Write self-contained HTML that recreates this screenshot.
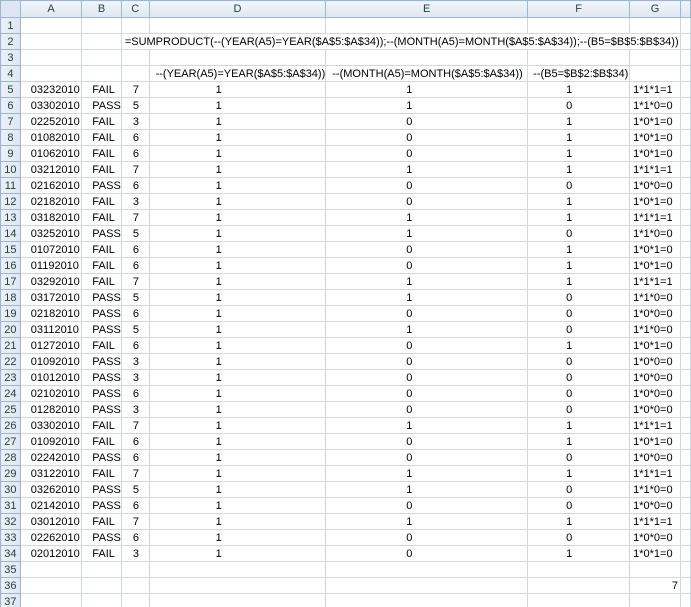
<!DOCTYPE html>
<html><head><meta charset="utf-8"><style>
html,body{margin:0;padding:0;background:#fff;width:691px;height:607px;overflow:hidden}
table{border-collapse:collapse;table-layout:fixed;font-family:"Liberation Sans",sans-serif;font-size:11px;color:#000}
td{box-sizing:border-box;height:16px;padding:0;border:1px solid #d0d7e5;white-space:nowrap;overflow:visible;line-height:14px}
tr.h td{height:17px;background:linear-gradient(#f2f6fb,#dde6f2);border:1px solid #9eb6ce;text-align:center;color:#27413e}
td.r{background:linear-gradient(90deg,#eaf0f8,#dfe7f2);border:1px solid #9eb6ce;text-align:center;color:#27413e;font-size:11px}
td.a{padding-left:10px}td.b{padding-left:10px}td.c{padding-left:11px}
td.d{padding-left:66px}td.e{padding-left:80px}td.f{padding-left:38px}td.g{padding-left:3px}
</style></head><body>
<table>
<colgroup><col style="width:22px"><col style="width:62px"><col style="width:38px"><col style="width:28px"><col style="width:173px"><col style="width:202px"><col style="width:102px"><col style="width:51px"><col style="width:13px"></colgroup>
<tr class="h"><td style="background:#dde6f2"></td><td>A</td><td>B</td><td>C</td><td>D</td><td>E</td><td>F</td><td>G</td><td></td></tr>
<tr><td class="r">1</td><td></td><td></td><td></td><td></td><td></td><td></td><td></td><td></td></tr>
<tr><td class="r">2</td><td></td><td></td><td colspan="5" style="padding-left:3px">=SUMPRODUCT(--(YEAR(A5)=YEAR($A$5:$A$34));--(MONTH(A5)=MONTH($A$5:$A$34));--(B5=$B$5:$B$34))</td><td></td></tr>
<tr><td class="r">3</td><td></td><td></td><td></td><td></td><td></td><td></td><td></td><td></td></tr>
<tr><td class="r">4</td><td></td><td></td><td></td><td style="padding-left:6px">--(YEAR(A5)=YEAR($A$5:$A$34))</td><td style="padding-left:6px">--(MONTH(A5)=MONTH($A$5:$A$34))</td><td style="padding-left:5px">--(B5=$B$2:$B$34)</td><td></td><td></td></tr>
<tr><td class="r">5</td><td class="a">03232010</td><td class="b">FAIL</td><td class="c">7</td><td class="d">1</td><td class="e">1</td><td class="f">1</td><td class="g">1*1*1=1</td><td></td></tr>
<tr><td class="r">6</td><td class="a">03302010</td><td class="b">PASS</td><td class="c">5</td><td class="d">1</td><td class="e">1</td><td class="f">0</td><td class="g">1*1*0=0</td><td></td></tr>
<tr><td class="r">7</td><td class="a">02252010</td><td class="b">FAIL</td><td class="c">3</td><td class="d">1</td><td class="e">0</td><td class="f">1</td><td class="g">1*0*1=0</td><td></td></tr>
<tr><td class="r">8</td><td class="a">01082010</td><td class="b">FAIL</td><td class="c">6</td><td class="d">1</td><td class="e">0</td><td class="f">1</td><td class="g">1*0*1=0</td><td></td></tr>
<tr><td class="r">9</td><td class="a">01062010</td><td class="b">FAIL</td><td class="c">6</td><td class="d">1</td><td class="e">0</td><td class="f">1</td><td class="g">1*0*1=0</td><td></td></tr>
<tr><td class="r">10</td><td class="a">03212010</td><td class="b">FAIL</td><td class="c">7</td><td class="d">1</td><td class="e">1</td><td class="f">1</td><td class="g">1*1*1=1</td><td></td></tr>
<tr><td class="r">11</td><td class="a">02162010</td><td class="b">PASS</td><td class="c">6</td><td class="d">1</td><td class="e">0</td><td class="f">0</td><td class="g">1*0*0=0</td><td></td></tr>
<tr><td class="r">12</td><td class="a">02182010</td><td class="b">FAIL</td><td class="c">3</td><td class="d">1</td><td class="e">0</td><td class="f">1</td><td class="g">1*0*1=0</td><td></td></tr>
<tr><td class="r">13</td><td class="a">03182010</td><td class="b">FAIL</td><td class="c">7</td><td class="d">1</td><td class="e">1</td><td class="f">1</td><td class="g">1*1*1=1</td><td></td></tr>
<tr><td class="r">14</td><td class="a">03252010</td><td class="b">PASS</td><td class="c">5</td><td class="d">1</td><td class="e">1</td><td class="f">0</td><td class="g">1*1*0=0</td><td></td></tr>
<tr><td class="r">15</td><td class="a">01072010</td><td class="b">FAIL</td><td class="c">6</td><td class="d">1</td><td class="e">0</td><td class="f">1</td><td class="g">1*0*1=0</td><td></td></tr>
<tr><td class="r">16</td><td class="a">01192010</td><td class="b">FAIL</td><td class="c">6</td><td class="d">1</td><td class="e">0</td><td class="f">1</td><td class="g">1*0*1=0</td><td></td></tr>
<tr><td class="r">17</td><td class="a">03292010</td><td class="b">FAIL</td><td class="c">7</td><td class="d">1</td><td class="e">1</td><td class="f">1</td><td class="g">1*1*1=1</td><td></td></tr>
<tr><td class="r">18</td><td class="a">03172010</td><td class="b">PASS</td><td class="c">5</td><td class="d">1</td><td class="e">1</td><td class="f">0</td><td class="g">1*1*0=0</td><td></td></tr>
<tr><td class="r">19</td><td class="a">02182010</td><td class="b">PASS</td><td class="c">6</td><td class="d">1</td><td class="e">0</td><td class="f">0</td><td class="g">1*0*0=0</td><td></td></tr>
<tr><td class="r">20</td><td class="a">03112010</td><td class="b">PASS</td><td class="c">5</td><td class="d">1</td><td class="e">1</td><td class="f">0</td><td class="g">1*1*0=0</td><td></td></tr>
<tr><td class="r">21</td><td class="a">01272010</td><td class="b">FAIL</td><td class="c">6</td><td class="d">1</td><td class="e">0</td><td class="f">1</td><td class="g">1*0*1=0</td><td></td></tr>
<tr><td class="r">22</td><td class="a">01092010</td><td class="b">PASS</td><td class="c">3</td><td class="d">1</td><td class="e">0</td><td class="f">0</td><td class="g">1*0*0=0</td><td></td></tr>
<tr><td class="r">23</td><td class="a">01012010</td><td class="b">PASS</td><td class="c">3</td><td class="d">1</td><td class="e">0</td><td class="f">0</td><td class="g">1*0*0=0</td><td></td></tr>
<tr><td class="r">24</td><td class="a">02102010</td><td class="b">PASS</td><td class="c">6</td><td class="d">1</td><td class="e">0</td><td class="f">0</td><td class="g">1*0*0=0</td><td></td></tr>
<tr><td class="r">25</td><td class="a">01282010</td><td class="b">PASS</td><td class="c">3</td><td class="d">1</td><td class="e">0</td><td class="f">0</td><td class="g">1*0*0=0</td><td></td></tr>
<tr><td class="r">26</td><td class="a">03302010</td><td class="b">FAIL</td><td class="c">7</td><td class="d">1</td><td class="e">1</td><td class="f">1</td><td class="g">1*1*1=1</td><td></td></tr>
<tr><td class="r">27</td><td class="a">01092010</td><td class="b">FAIL</td><td class="c">6</td><td class="d">1</td><td class="e">0</td><td class="f">1</td><td class="g">1*0*1=0</td><td></td></tr>
<tr><td class="r">28</td><td class="a">02242010</td><td class="b">PASS</td><td class="c">6</td><td class="d">1</td><td class="e">0</td><td class="f">0</td><td class="g">1*0*0=0</td><td></td></tr>
<tr><td class="r">29</td><td class="a">03122010</td><td class="b">FAIL</td><td class="c">7</td><td class="d">1</td><td class="e">1</td><td class="f">1</td><td class="g">1*1*1=1</td><td></td></tr>
<tr><td class="r">30</td><td class="a">03262010</td><td class="b">PASS</td><td class="c">5</td><td class="d">1</td><td class="e">1</td><td class="f">0</td><td class="g">1*1*0=0</td><td></td></tr>
<tr><td class="r">31</td><td class="a">02142010</td><td class="b">PASS</td><td class="c">6</td><td class="d">1</td><td class="e">0</td><td class="f">0</td><td class="g">1*0*0=0</td><td></td></tr>
<tr><td class="r">32</td><td class="a">03012010</td><td class="b">FAIL</td><td class="c">7</td><td class="d">1</td><td class="e">1</td><td class="f">1</td><td class="g">1*1*1=1</td><td></td></tr>
<tr><td class="r">33</td><td class="a">02262010</td><td class="b">PASS</td><td class="c">6</td><td class="d">1</td><td class="e">0</td><td class="f">0</td><td class="g">1*0*0=0</td><td></td></tr>
<tr><td class="r">34</td><td class="a">02012010</td><td class="b">FAIL</td><td class="c">3</td><td class="d">1</td><td class="e">0</td><td class="f">1</td><td class="g">1*0*1=0</td><td></td></tr>
<tr><td class="r">35</td><td></td><td></td><td></td><td></td><td></td><td></td><td></td><td></td></tr>
<tr><td class="r">36</td><td></td><td></td><td></td><td></td><td></td><td></td><td style="text-align:right;padding-right:2px">7</td><td></td></tr>
<tr><td class="r">37</td><td></td><td></td><td></td><td></td><td></td><td></td><td></td><td></td></tr>
</table>
</body></html>
